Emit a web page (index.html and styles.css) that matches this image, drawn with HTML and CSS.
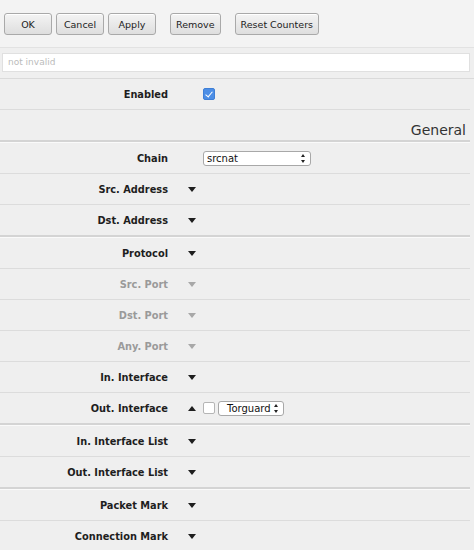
FILE: index.html
```html
<!DOCTYPE html>
<html lang="en">
<head>
    <meta charset="UTF-8">
    <meta name="viewport" content="width=device-width, initial-scale=1.0">
    <title>NAT Rule</title>
    <link rel="stylesheet" href="styles.css">
</head>
<body>
    <div class="toolbar">
        <button class="btn">OK</button>
        <button class="btn">Cancel</button>
        <button class="btn">Apply</button>
        <button class="btn spaced">Remove</button>
        <button class="btn spaced">Reset Counters</button>
    </div>
    <div class="status-wrap">
        <div class="status">not invalid</div>
    </div>

    <div class="form">
        <div class="group">
            <div class="row">
                <label class="label">Enabled</label>
                <div class="ctrl wide"><span class="check on"></span></div>
            </div>
            <div class="row section"><span class="title">General</span></div>
        </div>
        <div class="group">
            <div class="row">
                <label class="label">Chain</label>
                <div class="ctrl wide"><span class="select chain">srcnat<span class="updown"></span></span></div>
            </div>
            <div class="row">
                <label class="label">Src. Address</label>
                <div class="ctrl"><span class="arrow"></span></div>
            </div>
            <div class="row">
                <label class="label">Dst. Address</label>
                <div class="ctrl"><span class="arrow"></span></div>
            </div>
        </div>
        <div class="group">
            <div class="row">
                <label class="label">Protocol</label>
                <div class="ctrl"><span class="arrow"></span></div>
            </div>
            <div class="row off">
                <label class="label">Src. Port</label>
                <div class="ctrl"><span class="arrow"></span></div>
            </div>
            <div class="row off">
                <label class="label">Dst. Port</label>
                <div class="ctrl"><span class="arrow"></span></div>
            </div>
            <div class="row off">
                <label class="label">Any. Port</label>
                <div class="ctrl"><span class="arrow"></span></div>
            </div>
            <div class="row">
                <label class="label">In. Interface</label>
                <div class="ctrl"><span class="arrow"></span></div>
            </div>
            <div class="row">
                <label class="label">Out. Interface</label>
                <div class="ctrl">
                    <span class="arrow up"></span>
                    <span class="check"></span>
                    <span class="select iface">Torguard<span class="updown"></span></span>
                </div>
            </div>
        </div>
        <div class="group">
            <div class="row">
                <label class="label">In. Interface List</label>
                <div class="ctrl"><span class="arrow"></span></div>
            </div>
            <div class="row">
                <label class="label">Out. Interface List</label>
                <div class="ctrl"><span class="arrow"></span></div>
            </div>
        </div>
        <div class="group">
            <div class="row">
                <label class="label">Packet Mark</label>
                <div class="ctrl"><span class="arrow"></span></div>
            </div>
            <div class="row">
                <label class="label">Connection Mark</label>
                <div class="ctrl"><span class="arrow"></span></div>
            </div>
        </div>
    </div>
</body>
</html>
```

FILE: styles.css
```css
body {
    margin: 0;
    font-family: "DejaVu Sans", Verdana, sans-serif;
    font-size: 10px;
    background-color: #efefef;
    color: #222;
}
.toolbar {
    display: flex;
    gap: 4px;
    padding: 13px 4px 12px;
    background-color: #f3f3f3;
    border-bottom: 1px solid #e2e2e2;
}
.btn {
    height: 22px;
    min-width: 48px;
    padding: 0 5px;
    font-family: "DejaVu Sans", Verdana, sans-serif;
    font-size: 9.5px;
    color: #222;
    background: linear-gradient(#f4f4f4, #dedede);
    border: 1px solid #a9a9a9;
    border-radius: 3px;
    box-shadow: 0 1px 0 #fff inset;
}
.btn.spaced {
    margin-left: 10px;
}
.status-wrap {
    padding: 5px 4px 6px 2px;
    border-bottom: 1px solid #dadada;
}
.status {
    height: 17px;
    line-height: 17px;
    padding-left: 5px;
    background-color: #fff;
    border: 1px solid #e0e0e0;
    color: #bbb;
    font-size: 9px;
}
.form {
    margin-right: 4px;
}
.group {
    border-bottom: 2px solid #d4d4d4;
    border-top: 1px solid #fafafa;
}
.group:first-child {
    border-top: none;
}
.group:last-child {
    border-bottom: none;
}
.row {
    display: flex;
    align-items: center;
    height: 30px;
    border-bottom: 1px solid #dcdcdc;
}
.row:last-child {
    border-bottom: none;
}
.label {
    width: 168px;
    text-align: right;
    font-weight: bold;
    font-size: 9.8px;
    color: #1e1e1e;
}
.row.off .label {
    color: #9a9a9a;
}
.ctrl {
    display: flex;
    align-items: center;
    padding-left: 20px;
}
.ctrl.wide {
    padding-left: 35px;
}
.arrow {
    width: 0;
    height: 0;
    border-left: 4px solid transparent;
    border-right: 4px solid transparent;
    border-top: 5px solid #1e1e1e;
    margin-right: 7px;
}
.arrow.up {
    border-top: none;
    border-bottom: 5px solid #1e1e1e;
}
.row.off .arrow {
    border-top-color: #a8a8a8;
}
.check {
    box-sizing: border-box;
    width: 12px;
    height: 12px;
    border: 1px solid #b5b5b5;
    border-radius: 2px;
    background-color: #fff;
    position: relative;
}
.check.on {
    background-color: #4c8ee6;
    border-color: #3f7fd6;
}
.check.on::after {
    content: "";
    position: absolute;
    left: 3px;
    top: 1px;
    width: 3px;
    height: 6px;
    border: solid #fff;
    border-width: 0 1.5px 1.5px 0;
    transform: rotate(40deg);
}
.select {
    display: inline-flex;
    align-items: center;
    justify-content: space-between;
    box-sizing: border-box;
    height: 15px;
    padding: 0 4px 0 3px;
    background-color: #fff;
    border: 1px solid #a8a8a8;
    border-radius: 3px;
    font-size: 10px;
    color: #111;
}
.select.chain {
    width: 108px;
}
.select.iface {
    width: 66px;
    margin-left: 3px;
    padding-left: 8px;
}
.updown {
    position: relative;
    width: 5px;
    height: 9px;
}
.updown::before,
.updown::after {
    content: "";
    position: absolute;
    left: 0;
    border-left: 2.5px solid transparent;
    border-right: 2.5px solid transparent;
}
.updown::before {
    top: 0;
    border-bottom: 3px solid #222;
}
.updown::after {
    bottom: 0;
    border-top: 3px solid #222;
}
.section {
    justify-content: flex-end;
    align-items: flex-end;
    padding-right: 4px;
}
.title {
    font-size: 14px;
    color: #333;
    padding-bottom: 2px;
}
```
